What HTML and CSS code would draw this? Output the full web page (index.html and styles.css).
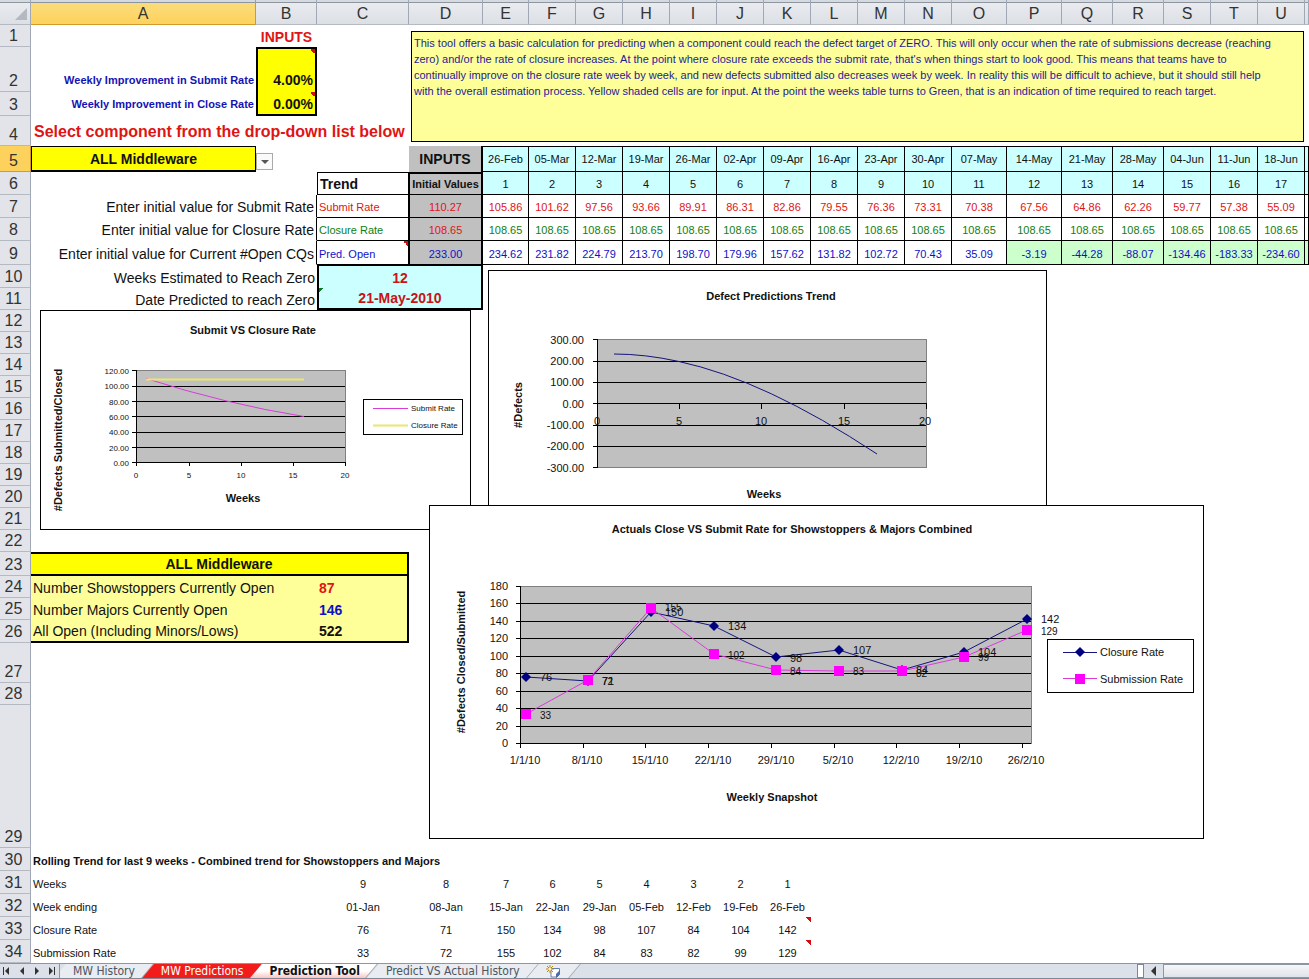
FILE: index.html
```html
<!DOCTYPE html>
<html lang="en">
<head>
    <meta charset="UTF-8">
    <meta name="viewport" content="width=device-width, initial-scale=1.0">
    <title>Prediction Tool</title>
    <link rel="stylesheet" href="styles.css">
</head>
<body>
    <main class="sheet">
        <table class="grid">
            <colgroup>
                <col class="w-head"><col class="w-a"><col class="w-b"><col class="w-c"><col class="w-d">
                <col class="w-e"><col class="w-week" span="9"><col class="w-wide" span="2">
                <col class="w-mid" span="2"><col class="w-week" span="3"><col>
            </colgroup>
            <thead>
                <tr>
                    <th class="corner"><svg width="12" height="12" viewBox="0 0 12 12"><path d="M12 0V12H0Z" fill="#b4b9c1"/></svg></th>
                    <th class="active">A</th><th>B</th><th>C</th><th>D</th><th>E</th><th>F</th><th>G</th><th>H</th><th>I</th><th>J</th><th>K</th><th>L</th><th>M</th><th>N</th><th>O</th><th>P</th><th>Q</th><th>R</th><th>S</th><th>T</th><th>U</th><th></th>
                </tr>
            </thead>
            <tbody>
                <tr class="h22"><th>1</th><td></td><td class="wide bold red center">INPUTS</td><td colspan="20"></td></tr>
                <tr class="h45"><th>2</th><td class="label">Weekly Improvement in Submit Rate</td><td class="rate rate-top mark">4.00%</td><td colspan="20"></td></tr>
                <tr class="h24"><th>3</th><td class="label">Weekly Improvement in Close Rate</td><td class="rate rate-bottom mark">0.00%</td><td colspan="20"></td></tr>
                <tr class="h30"><th>4</th><td class="prompt" colspan="3">Select component from the drop-down list below</td><td colspan="19"></td></tr>
                <tr class="h26 weeks first">
                    <th class="active">5</th>
                    <td class="picker">
                        <select class="component" aria-label="Component">
                            <option>ALL Middleware</option>
                        </select>
                        <button class="drop" type="button" aria-label="Open list"><svg width="8" height="4" viewBox="0 0 8 4"><path d="M0 0H8L4 4Z" fill="#555"/></svg></button>
                    </td>
                    <td></td><td></td>
                    <td class="gray wide bold center">INPUTS</td>
                    <td>26-Feb</td><td>05-Mar</td><td>12-Mar</td><td>19-Mar</td><td>26-Mar</td><td>02-Apr</td><td>09-Apr</td><td>16-Apr</td><td>23-Apr</td><td>30-Apr</td><td>07-May</td><td>14-May</td><td>21-May</td><td>28-May</td><td>04-Jun</td><td>11-Jun</td><td>18-Jun</td><td></td>
                </tr>
                <tr class="h23 weeks">
                    <th>6</th><td colspan="2"></td>
                    <td class="trend trend-head">Trend</td><td class="gray initial initial-head">Initial Values</td>
                    <td>1</td><td>2</td><td>3</td><td>4</td><td>5</td><td>6</td><td>7</td><td>8</td><td>9</td><td>10</td><td>11</td><td>12</td><td>13</td><td>14</td><td>15</td><td>16</td><td>17</td><td></td>
                </tr>
                <tr class="h23 values red">
                    <th>7</th><td class="caption" colspan="2">Enter initial value for Submit Rate</td>
                    <td class="trend">Submit Rate</td><td class="gray initial">110.27</td>
                    <td>105.86</td><td>101.62</td><td>97.56</td><td>93.66</td><td>89.91</td><td>86.31</td><td>82.86</td><td>79.55</td><td>76.36</td><td>73.31</td><td>70.38</td><td>67.56</td><td>64.86</td><td>62.26</td><td>59.77</td><td>57.38</td><td>55.09</td><td></td>
                </tr>
                <tr class="h23 values green">
                    <th>8</th><td class="caption" colspan="2">Enter initial value for Closure Rate</td>
                    <td class="trend">Closure Rate</td><td class="gray initial red">108.65</td>
                    <td>108.65</td><td>108.65</td><td>108.65</td><td>108.65</td><td>108.65</td><td>108.65</td><td>108.65</td><td>108.65</td><td>108.65</td><td>108.65</td><td>108.65</td><td>108.65</td><td>108.65</td><td>108.65</td><td>108.65</td><td>108.65</td><td>108.65</td><td></td>
                </tr>
                <tr class="h24 values blue">
                    <th>9</th><td class="caption" colspan="2">Enter initial value for Current #Open CQs</td>
                    <td class="trend mark">Pred. Open</td><td class="gray initial">233.00</td>
                    <td>234.62</td><td>231.82</td><td>224.79</td><td>213.70</td><td>198.70</td><td>179.96</td><td>157.62</td><td>131.82</td><td>102.72</td><td>70.43</td><td>35.09</td><td class="reached">-3.19</td><td class="reached">-44.28</td><td class="reached">-88.07</td><td class="reached">-134.46</td><td class="reached">-183.33</td><td class="reached">-234.60</td><td class="reached"></td>
                </tr>
                <tr class="h23"><th>10</th><td class="caption" colspan="2">Weeks Estimated to Reach Zero</td><td class="result result-top" colspan="2">12</td><td colspan="18"></td></tr>
                <tr class="h22"><th>11</th><td class="caption" colspan="2">Date Predicted to reach Zero</td><td class="result result-bottom" colspan="2">21-May-2010</td><td colspan="18"></td></tr>
                <tr class="h22"><th>12</th><td colspan="22"></td></tr>
                <tr class="h22"><th>13</th><td colspan="22"></td></tr>
                <tr class="h22"><th>14</th><td colspan="22"></td></tr>
                <tr class="h22"><th>15</th><td colspan="22"></td></tr>
                <tr class="h22"><th>16</th><td colspan="22"></td></tr>
                <tr class="h22"><th>17</th><td colspan="22"></td></tr>
                <tr class="h22"><th>18</th><td colspan="22"></td></tr>
                <tr class="h22"><th>19</th><td colspan="22"></td></tr>
                <tr class="h22"><th>20</th><td colspan="22"></td></tr>
                <tr class="h22"><th>21</th><td colspan="22"></td></tr>
                <tr class="h22"><th>22</th><td colspan="22"></td></tr>
                <tr class="h24"><th>23</th><td class="summary-head" colspan="3">ALL Middleware</td><td colspan="19"></td></tr>
                <tr class="h22 summary"><th>24</th><td colspan="2">Number Showstoppers Currently Open</td><td class="total red">87</td><td class="blank" colspan="19"></td></tr>
                <tr class="h22 summary"><th>25</th><td colspan="2">Number Majors Currently Open</td><td class="total blue">146</td><td class="blank" colspan="19"></td></tr>
                <tr class="h23 summary last"><th>26</th><td colspan="2">All Open (Including Minors/Lows)</td><td class="total">522</td><td class="blank" colspan="19"></td></tr>
                <tr class="h40"><th>27</th><td colspan="22"></td></tr>
                <tr class="h22"><th>28</th><td colspan="22"></td></tr>
                <tr class="h143"><th>29</th><td colspan="22"></td></tr>
                <tr class="h23"><th>30</th><td class="bold" colspan="22">Rolling Trend for last 9 weeks - Combined trend for Showstoppers and Majors</td></tr>
                <tr class="h23 rolling"><th>31</th><td colspan="2">Weeks</td><td>9</td><td>8</td><td>7</td><td>6</td><td>5</td><td>4</td><td>3</td><td>2</td><td>1</td><td colspan="11"></td></tr>
                <tr class="h23 rolling"><th>32</th><td colspan="2">Week ending</td><td>01-Jan</td><td>08-Jan</td><td>15-Jan</td><td>22-Jan</td><td>29-Jan</td><td>05-Feb</td><td>12-Feb</td><td>19-Feb</td><td>26-Feb</td><td colspan="11"></td></tr>
                <tr class="h23 rolling"><th>33</th><td colspan="2">Closure Rate</td><td>76</td><td>71</td><td>150</td><td>134</td><td>98</td><td>107</td><td>84</td><td>104</td><td class="mark">142</td><td colspan="11"></td></tr>
                <tr class="h23 rolling"><th>34</th><td colspan="2">Submission Rate</td><td>33</td><td>72</td><td>155</td><td>102</td><td>84</td><td>83</td><td>82</td><td>99</td><td class="mark">129</td><td colspan="11"></td></tr>
            </tbody>
        </table>

        <!-- Objects floating over the cells -->
        <p class="note">This tool offers a basic calculation for predicting when a component could reach the defect target of ZERO. This will only occur when the rate of submissions decrease (reaching<br>zero) and/or the rate of closure increases. At the point where closure rate exceeds the submit rate, that's when things start to look good. This means that teams have to<br>continually improve on the closure rate week by week, and new defects submitted also decreases week by week. In reality this will be difficult to achieve, but it should still help<br>with the overall estimation process. Yellow shaded cells are for input. At the point the weeks table turns to Green, that is an indication of time required to reach target.</p>

        <!-- viewBox values are sheet coordinates -->
        <svg class="chart chart-rates" viewBox="40 310 431 220" width="431" height="220">
            <rect class="frame" x="40.5" y="310.5" width="430" height="219"/>
            <text class="title" x="253" y="334">Submit VS Closure Rate</text>
            <text class="title" x="243" y="502">Weeks</text>
            <text class="title" transform="translate(62 440) rotate(-90)">#Defects Submitted/Closed</text>
            <rect class="plot" x="136.5" y="370.5" width="209" height="92"/>
            <path class="axis" d="M136.5 370V463M132 370.5h5M132 386.5H345M132 401.5H345M132 416.5H345M132 432.5H345M132 447.5H345M132 462.5H345M136.5 462v4M189.5 462v4M241.5 462v4M293.5 462v4M345.5 462v4"/>
            <g class="small end">
                <text x="129" y="374">120.00</text><text x="129" y="389">100.00</text><text x="129" y="405">80.00</text><text x="129" y="420">60.00</text><text x="129" y="435">40.00</text><text x="129" y="451">20.00</text><text x="129" y="466">0.00</text>
            </g>
            <g class="small mid">
                <text x="136" y="478">0</text><text x="189" y="478">5</text><text x="241" y="478">10</text><text x="293" y="478">15</text><text x="345" y="478">20</text>
            </g>
            <path class="line pink" d="M146 378.500Q226 404 304 416.500"/>
            <path class="line yellow" d="M146 379.500H304"/>
            <rect class="frame" x="363.500" y="399.500" width="99" height="35"/>
            <path class="line pink" d="M373 408.500h35"/>
            <path class="line yellow" d="M373 425.500h35"/>
            <text class="small" x="411" y="411">Submit Rate</text>
            <text class="small" x="411" y="428">Closure Rate</text>
        </svg>

        <svg class="chart chart-trend" viewBox="488 270 559 236" width="559" height="236">
            <rect class="frame" x="488.500" y="270.500" width="558" height="235"/>
            <text class="title" x="771" y="300">Defect Predictions Trend</text>
            <text class="title" x="764" y="498">Weeks</text>
            <text class="title" transform="translate(522 405) rotate(-90)">#Defects</text>
            <rect class="plot" x="597.500" y="339.500" width="329" height="128"/>
            <path class="axis" d="M597.500 339V468M593 339.500h5M593 361.500H926M593 382.500H926M593 403.500H926M593 425.500H926M593 446.500H926M593 467.500h5M679.500 403v6M761.500 403v6M844.500 403v6M926.500 403v6"/>
            <g class="mid">
                <text x="597" y="425">0</text><text x="679" y="425">5</text><text x="761" y="425">10</text><text x="844" y="425">15</text><text x="925" y="425">20</text>
            </g>
            <g class="end">
                <text x="584" y="344">300.00</text><text x="584" y="365">200.00</text><text x="584" y="386">100.00</text><text x="584" y="408">0.00</text><text x="584" y="429">-100.00</text><text x="584" y="450">-200.00</text><text x="584" y="472">-300.00</text>
            </g>
            <path class="line navy" d="M614 354Q645 354 679 361.500Q765 380 877 454"/>
        </svg>

        <svg class="chart chart-actuals" viewBox="429 505 775 334" width="775" height="334">
            <defs>
                <path id="diamond" d="M0 -5L5 0L0 5L-5 0Z" fill="#000080"/>
                <rect id="square" x="-5" y="-5" width="10" height="10" fill="#ff00ff"/>
            </defs>
            <rect class="frame" x="429.500" y="505.500" width="774" height="333"/>
            <text class="title" x="792" y="533">Actuals Close VS Submit Rate for Showstoppers &amp; Majors Combined</text>
            <text class="title" x="772" y="801">Weekly Snapshot</text>
            <text class="title" transform="translate(465 662) rotate(-90)">#Defects Closed/Submitted</text>
            <rect class="plot" x="520.500" y="586.500" width="511" height="157"/>
            <path class="axis" d="M520.500 586V744M516 586.500h5M516 603.500H1031M516 621.500H1031M516 638.500H1031M516 656.500H1031M516 673.500H1031M516 691.500H1031M516 708.500H1031M516 726.500H1031M516 743.500H1031M520.500 743v5M583.500 743v5M645.500 743v5M708.500 743v5M771.500 743v5M834.500 743v5M896.500 743v5M959.500 743v5M1022.500 743v5"/>
            <g class="end">
                <text x="508" y="590">180</text><text x="508" y="607">160</text><text x="508" y="625">140</text><text x="508" y="642">120</text><text x="508" y="660">100</text><text x="508" y="677">80</text><text x="508" y="695">60</text><text x="508" y="712">40</text><text x="508" y="730">20</text><text x="508" y="747">0</text>
            </g>
            <g class="mid">
                <text x="525" y="764">1/1/10</text><text x="587" y="764">8/1/10</text><text x="650" y="764">15/1/10</text><text x="713" y="764">22/1/10</text><text x="776" y="764">29/1/10</text><text x="838" y="764">5/2/10</text><text x="901" y="764">12/2/10</text><text x="964" y="764">19/2/10</text><text x="1026" y="764">26/2/10</text>
            </g>
            <polyline class="line navy" points="526,677 588,681 651,612 714,626 776,657 839,650 902,670 964,652 1027,619"/>
            <use href="#diamond" x="526" y="677"/><use href="#diamond" x="588" y="681"/><use href="#diamond" x="651" y="612"/><use href="#diamond" x="714" y="626"/><use href="#diamond" x="776" y="657"/><use href="#diamond" x="839" y="650"/><use href="#diamond" x="902" y="670"/><use href="#diamond" x="964" y="652"/><use href="#diamond" x="1027" y="619"/>
            <polyline class="line pink" points="526,714 588,680 651,608 714,654 776,670 839,671 902,671 964,657 1027,630"/>
            <use href="#square" x="526" y="714"/><use href="#square" x="588" y="680"/><use href="#square" x="651" y="608"/><use href="#square" x="714" y="654"/><use href="#square" x="776" y="670"/><use href="#square" x="839" y="671"/><use href="#square" x="902" y="671"/><use href="#square" x="964" y="657"/><use href="#square" x="1027" y="630"/>
            <g>
                <text x="540" y="681">76</text><text x="602" y="685">71</text><text x="665" y="616">150</text><text x="728" y="630">134</text><text x="790" y="662">98</text><text x="853" y="654">107</text><text x="916" y="674">84</text><text x="978" y="656">104</text><text x="1041" y="623">142</text>
            </g>
            <g class="point">
                <text x="540" y="719">33</text><text x="602" y="685">72</text><text x="665" y="611">155</text><text x="728" y="659">102</text><text x="790" y="675">84</text><text x="853" y="675">83</text><text x="916" y="677">82</text><text x="978" y="661">99</text><text x="1041" y="635">129</text>
            </g>
            <rect class="frame" x="1047.500" y="639.500" width="146" height="53"/>
            <path class="line navy" d="M1063 652.500h34"/><use href="#diamond" x="1080" y="652"/>
            <path class="line pink" d="M1063 678.500h34"/><use href="#square" x="1080" y="679"/>
            <text x="1100" y="656">Closure Rate</text>
            <text x="1100" y="683">Submission Rate</text>
        </svg>
    </main>

    <footer class="bar">
        <div class="nav">
            <button type="button" aria-label="First sheet"><svg width="8" height="8" viewBox="0 0 8 8"><path d="M0 0H1V8H0ZM6 0V8L2 4Z"/></svg></button>
            <button type="button" aria-label="Previous sheet"><svg width="8" height="8" viewBox="0 0 8 8"><path d="M6 0V8L2 4Z"/></svg></button>
            <button type="button" aria-label="Next sheet"><svg width="8" height="8" viewBox="0 0 8 8"><path d="M2 0V8L6 4Z"/></svg></button>
            <button type="button" aria-label="Last sheet"><svg width="8" height="8" viewBox="0 0 8 8"><path d="M1 0V8L5 4ZM6 0H7V8H6Z"/></svg></button>
        </div>
        <nav class="tabs">
            <button class="tab" type="button">MW History</button>
            <button class="tab tab-red" type="button">MW Predictions</button>
            <button class="tab tab-active" type="button">Prediction Tool</button>
            <button class="tab" type="button">Predict VS Actual History</button>
            <button class="tab tab-new" type="button" aria-label="Insert sheet">
                <svg width="16" height="13" viewBox="0 0 16 13">
                    <path d="M5 3.500H13.500V9.500L11 12H5Z" fill="#fff" stroke="#5f7fb5"/>
                    <path d="M14 5V9L10 13V9Z" fill="#4a6ea9"/>
                    <path d="M4 0V8M0 4H8M1 1L7 7M7 1L1 7" stroke="#b8860b"/>
                    <circle cx="4" cy="4" r="1.500" fill="#fff3b0"/>
                </svg>
            </button>
        </nav>
        <div class="scroll">
            <span class="split"></span>
            <button type="button" aria-label="Scroll left"><svg width="6" height="10" viewBox="0 0 6 10"><path d="M5 0V10L0 5Z"/></svg></button>
            <span class="thumb"></span>
        </div>
    </footer>
</body>
</html>
```

FILE: styles.css
```css
* {
    margin: 0;
    padding: 0;
    box-sizing: border-box;
}

body {
    display: flex;
    flex-direction: column;
    height: 100vh;
    overflow: hidden;
    background: #fff;
    color: #111;
    font: 11px/20px "Liberation Sans", Arial, sans-serif;
}

button,
select {
    font: inherit;
    color: inherit;
    border: none;
    background: none;
}

.sheet {
    position: relative;
    flex: 1;
    min-height: 0;
    overflow: hidden;
}

/* Cells */
.grid {
    width: 100%;
    table-layout: fixed;
    border-collapse: separate;
    border-spacing: 0;
}

.w-head { width: 31px; }
.w-a { width: 225px; }
.w-b { width: 61px; }
.w-c { width: 92px; }
.w-d { width: 74px; }
.w-e { width: 46px; }
.w-week { width: 47px; }
.w-mid { width: 51px; }
.w-wide { width: 55px; }

.h22 { height: 22px; }
.h23 { height: 23px; }
.h24 { height: 24px; }
.h26 { height: 26px; }
.h30 { height: 30px; }
.h40 { height: 40px; }
.h45 { height: 45px; }
.h143 { height: 143px; }

th {
    background: #e2e4e9;
    border-right: 1px solid #a0a8b5;
    border-bottom: 1px solid #b4b9c2;
    color: #333;
    font-size: 16px;
    font-weight: normal;
    text-align: center;
    vertical-align: bottom;
}

tbody th {
    padding-right: 3px;
}

thead th {
    height: 25px;
    padding-top: 3px;
    vertical-align: middle;
    background: linear-gradient(#d5d9e0 2px, #8f959e 2px, #8f959e 3px, #e9ebef 3px, #dcdfe5);
}

.active {
    background: #fdd25c;
    border-color: #d29a2c;
}

thead .active {
    background: linear-gradient(#d5d9e0 2px, #8f959e 2px, #8f959e 3px, #fbdc7c 3px, #fdd25c);
}

.corner svg {
    display: block;
    margin-left: 15px;
}

td {
    padding: 0 2px;
    vertical-align: bottom;
    white-space: nowrap;
}

.bold { font-weight: bold; }
.center { text-align: center; }
.red { color: #e01414; }
.green { color: #108010; }
.blue { color: #1010c8; }

.wide,
.caption,
.summary td {
    font-size: 14px;
}

.label {
    color: #1414b4;
    font-weight: bold;
    line-height: 24px;
    text-align: right;
}

.rate {
    background-color: #ff0;
    border: 0 solid #000;
    border-width: 0 2px;
    font-size: 14px;
    font-weight: bold;
    text-align: right;
}

.rate-top {
    border-top-width: 2px;
    line-height: 24px;
}

.rate-bottom { border-bottom-width: 2px; }

/* Comment marker in the cell corner */
.mark {
    background-image: linear-gradient(to top right, transparent 50%, #d01010 50%);
    background-size: 5px 5px;
    background-position: top right;
    background-repeat: no-repeat;
}

.prompt {
    color: #e01414;
    font-size: 16px;
    font-weight: bold;
    line-height: 28px;
    padding-left: 3px;
}

.first td {
    vertical-align: middle;
}

.picker {
    position: relative;
    padding: 0;
}

.component {
    appearance: none;
    display: block;
    width: 100%;
    height: 26px;
    background: #ff0;
    border: 1px solid #000;
    border-bottom-width: 2px;
    font-size: 14px;
    font-weight: bold;
    text-align: center;
    text-align-last: center;
}

.drop {
    position: absolute;
    left: 100%;
    bottom: 2px;
    width: 17px;
    height: 17px;
    display: flex;
    align-items: center;
    justify-content: center;
    background: #fafafa;
    border: 1px solid #aaa;
}

.weeks td:nth-last-child(-n+18) {
    background: #cff;
    border-right: 1px solid #000;
    border-bottom: 1px solid #000;
    color: #111;
    text-align: center;
}

.first td:nth-last-child(-n+18) {
    border-top: 1px solid #000;
}

.values td {
    padding: 0;
    border-right: 1px solid #000;
    border-bottom: 1px solid #000;
    text-align: center;
}

.values .reached {
    background: #cfc;
}

.caption,
.values .caption {
    padding-right: 2px;
    color: #111;
    text-align: right;
}

.values .caption {
    border-bottom-color: transparent;
}

.trend,
.values .trend {
    padding-left: 2px;
    border-right: 1px solid #000;
    border-bottom: 1px solid #000;
    text-align: left;
}

.trend-head {
    border-top: 1px solid #000;
    border-left: 1px solid #000;
    font-size: 14px;
    font-weight: bold;
}

.gray,
.values .gray {
    background: #c0c0c0;
    border-right: 2px solid #000;
}

.initial {
    border-left: 1px solid #000;
    text-align: center;
}

.gray.initial {
    border-bottom: 1px solid #000;
}

.initial-head {
    border-top: 2px solid #000;
    padding: 0;
    font-weight: bold;
}

td.red { color: #e01414; }

.result {
    background: #cff;
    border: 0 solid #000;
    border-width: 0 2px;
    color: #c81414;
    font-size: 14px;
    font-weight: bold;
    text-align: center;
}

.result-top { border-top-width: 1px; }

.result-bottom {
    border-bottom-width: 2px;
    background: linear-gradient(to bottom right, #0a7a2a 50%, transparent 50%) 0 0 / 5px 5px no-repeat #cff;
}

.summary-head {
    background: #ff0;
    border: 2px solid #000;
    border-left: none;
    font-size: 14px;
    font-weight: bold;
    text-align: center;
}

.summary td {
    background: #ff9;
}

.summary .total {
    border-right: 2px solid #000;
    font-weight: bold;
}

.summary.last td {
    border-bottom: 2px solid #000;
}

.summary td.blank {
    background: none;
    border: none;
}

.rolling td {
    text-align: center;
}

.rolling td:nth-child(2) {
    text-align: left;
}

/* Floating objects */
.note {
    position: absolute;
    top: 31px;
    left: 411px;
    right: 5px;
    height: 111px;
    padding: 3px 2px;
    background: #ff9;
    border: 1px solid #000;
    color: #1c1c96;
    line-height: 16px;
}

.chart {
    position: absolute;
    background: #fff;
}

.chart-rates { left: 40px; top: 310px; }
.chart-trend { left: 488px; top: 270px; }
.chart-actuals { left: 429px; top: 505px; }

.chart text { fill: #111; }
.chart .title {
    font-weight: bold;
    text-anchor: middle;
}
.chart .small { font-size: 8px; }
.chart .point { font-size: 10px; }
.mid { text-anchor: middle; }
.end { text-anchor: end; }

.frame {
    fill: #fff;
    stroke: #000;
}

.plot {
    fill: #c0c0c0;
    stroke: #808080;
}

.axis {
    fill: none;
    stroke: #000;
}

.line {
    fill: none;
    stroke-width: 1;
}

.pink { stroke: #d83cd8; }
.navy { stroke: #14147d; }
.yellow {
    stroke: #ece66e;
    stroke-width: 2;
}

/* Sheet tabs */
.bar {
    display: flex;
    height: 16px;
    background: #dce1e9;
    border-top: 1px solid #8d96a5;
    border-bottom: 1px solid #7d8796;
}

.nav {
    position: relative;
    z-index: 1;
    display: flex;
    width: 60px;
    background: #dce1e9;
    border-right: 1px solid #8d96a5;
}

.nav button {
    flex: 1;
    display: flex;
    align-items: center;
    justify-content: center;
}

.nav svg,
.scroll svg {
    fill: #333;
}

.tabs {
    display: flex;
    flex: 1;
}

.tab {
    position: relative;
    z-index: 0;
    padding: 0 13px;
    color: #4c5560;
    font: 12px/14px "DejaVu Sans Condensed", "DejaVu Sans", sans-serif;
}

.tab::before {
    content: "";
    position: absolute;
    z-index: -1;
    inset: 0;
    background: #e9ecf1;
    border-right: 1px solid #9aa3b0;
    transform: skewX(-40deg);
}

.tab-red {
    color: #fff;
}

.tab-red::before {
    background: #f21c1c;
}

.tab-active {
    color: #111;
    font-weight: bold;
}

.tab-active::before {
    background: linear-gradient(#fff 50%, #fbc4c4);
}

.tab-new svg {
    display: block;
}

.scroll {
    display: flex;
    width: 172px;
}

.split {
    width: 7px;
    background: #fff;
    border: 1px solid #7d8796;
}

.scroll button {
    width: 19px;
    display: flex;
    align-items: center;
    justify-content: center;
}

.thumb {
    flex: 1;
    background: linear-gradient(#f6f7f9, #dfe3e9);
    border: 1px solid #8d96a5;
    border-right: none;
}
```
